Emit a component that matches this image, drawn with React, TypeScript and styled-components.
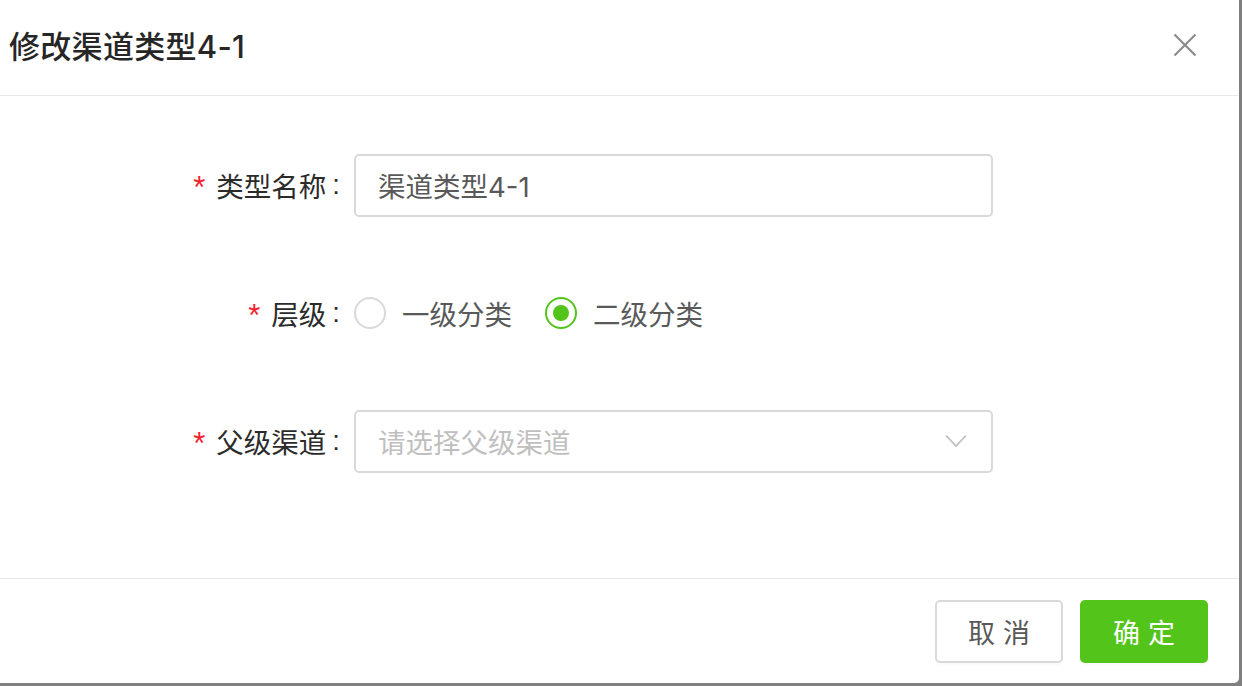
import React, { useState } from "react";
import styled, { createGlobalStyle, css } from "styled-components";

const fontStack = `"Inter", "Noto Sans CJK SC", "Liberation Sans", sans-serif`;

const GlobalStyle = createGlobalStyle`
  html, body {
    margin: 0;
    padding: 0;
    background: #7f7f7f;
  }
  body {
    font-family: ${fontStack};
    -webkit-font-smoothing: antialiased;
  }
`;

const Page = styled.div`
  width: 1242px;
  height: 686px;
  background: #7f7f7f;
  overflow: hidden;
`;

const Modal = styled.div`
  width: 1239px;
  height: 683px;
  background: #fff;
  border-bottom-right-radius: 5px;
  display: flex;
  flex-direction: column;
`;

const Header = styled.div`
  height: 96px;
  border-bottom: 1px solid #e8e8e8;
  display: flex;
  align-items: center;
  justify-content: space-between;
  padding: 0 42px 6px 9px;
  box-sizing: border-box;
`;

const Title = styled.div`
  font-size: 31px;
  font-weight: 500;
  color: #262626;
  letter-spacing: 0.3px;
`;

const CloseButton = styled.button`
  border: 0;
  background: none;
  padding: 0;
  width: 24px;
  height: 24px;
  display: flex;
  align-items: center;
  justify-content: center;
  cursor: pointer;
`;

const Body = styled.div`
  flex: 1;
  padding-top: 57px;
  display: flex;
  flex-direction: column;
  gap: 64px;
`;

const Row = styled.div`
  display: flex;
  align-items: center;
  height: 64px;
`;

const Label = styled.label`
  width: 354px;
  padding-right: 14px;
  box-sizing: border-box;
  display: flex;
  justify-content: flex-end;
  align-items: center;
  font-size: 27.5px;
  color: #2b2b2b;
  white-space: nowrap;

  &::after {
    content: ":";
    margin-left: 6px;
    font-family: "Liberation Sans", sans-serif;
  }
`;

const Required = styled.span`
  color: #f5222d;
  font-family: "Liberation Sans", sans-serif;
  font-size: 31px;
  margin-right: 11px;
  position: relative;
  top: 3px;
`;

const fieldBox = css`
  width: 639px;
  height: 63px;
  box-sizing: border-box;
  border: 2px solid #d9d9d9;
  border-radius: 5px;
  padding: 0 22px;
  font-family: ${fontStack};
  font-size: 27.5px;
`;

const TextInput = styled.input`
  ${fieldBox};
  color: #595959;
  outline: none;
  background: #fff;
`;

const SelectBox = styled.div`
  ${fieldBox};
  display: flex;
  align-items: center;
  justify-content: space-between;
  padding-right: 24px;
  cursor: pointer;
`;

const Placeholder = styled.span`
  color: #bfbfbf;
`;

const RadioGroup = styled.div`
  display: flex;
  align-items: center;
  gap: 33px;
`;

const RadioItem = styled.label`
  display: flex;
  align-items: center;
  gap: 16px;
  font-size: 27.5px;
  color: #595959;
  cursor: pointer;
`;

const RadioCircle = styled.span<{ $checked: boolean }>`
  width: 32px;
  height: 32px;
  box-sizing: border-box;
  border-radius: 50%;
  border: 2px solid ${({ $checked }) => ($checked ? "#52c41a" : "#d9d9d9")};
  display: flex;
  align-items: center;
  justify-content: center;

  &::after {
    content: "";
    width: 16px;
    height: 16px;
    border-radius: 50%;
    background: #52c41a;
    display: ${({ $checked }) => ($checked ? "block" : "none")};
  }
`;

const Footer = styled.div`
  height: 105px;
  border-top: 1px solid #e8e8e8;
  box-sizing: border-box;
  display: flex;
  align-items: flex-start;
  justify-content: flex-end;
  gap: 17px;
  padding: 21px 31px 0 0;
`;

const Button = styled.button<{ $primary?: boolean }>`
  width: 128px;
  height: 63px;
  box-sizing: border-box;
  border-radius: 5px;
  font-family: ${fontStack};
  font-size: 27px;
  letter-spacing: 8px;
  padding: 0 0 0 8px;
  cursor: pointer;
  border: 2px solid ${({ $primary }) => ($primary ? "#52c41a" : "#d9d9d9")};
  background: ${({ $primary }) => ($primary ? "#52c41a" : "#fff")};
  color: ${({ $primary }) => ($primary ? "#fff" : "#595959")};
  box-shadow: 0 2px 0 rgba(0, 0, 0, 0.02);
`;

const levels = ["一级分类", "二级分类"];

export default function App() {
  const [level, setLevel] = useState(1);

  return (
    <Page>
      <GlobalStyle />
      <Modal>
        <Header>
          <Title>修改渠道类型4-1</Title>
          <CloseButton aria-label="关闭">
            <svg width="24" height="24" viewBox="0 0 24 24">
              <path d="M1.5 1.5 L22.5 22.5 M22.5 1.5 L1.5 22.5" stroke="#8c8c8c" strokeWidth="2.2" fill="none" />
            </svg>
          </CloseButton>
        </Header>
        <Body>
          <Row>
            <Label>
              <Required>*</Required>类型名称
            </Label>
            <TextInput defaultValue="渠道类型4-1" />
          </Row>
          <Row>
            <Label>
              <Required>*</Required>层级
            </Label>
            <RadioGroup>
              {levels.map((name, i) => (
                <RadioItem key={name} onClick={() => setLevel(i)}>
                  <RadioCircle $checked={level === i} />
                  {name}
                </RadioItem>
              ))}
            </RadioGroup>
          </Row>
          <Row>
            <Label>
              <Required>*</Required>父级渠道
            </Label>
            <SelectBox>
              <Placeholder>请选择父级渠道</Placeholder>
              <svg width="22" height="14" viewBox="0 0 22 14">
                <path d="M1 1.5 L11 12 L21 1.5" stroke="#bfbfbf" strokeWidth="1.8" fill="none" />
              </svg>
            </SelectBox>
          </Row>
        </Body>
        <Footer>
          <Button>取消</Button>
          <Button $primary>确定</Button>
        </Footer>
      </Modal>
    </Page>
  );
}
